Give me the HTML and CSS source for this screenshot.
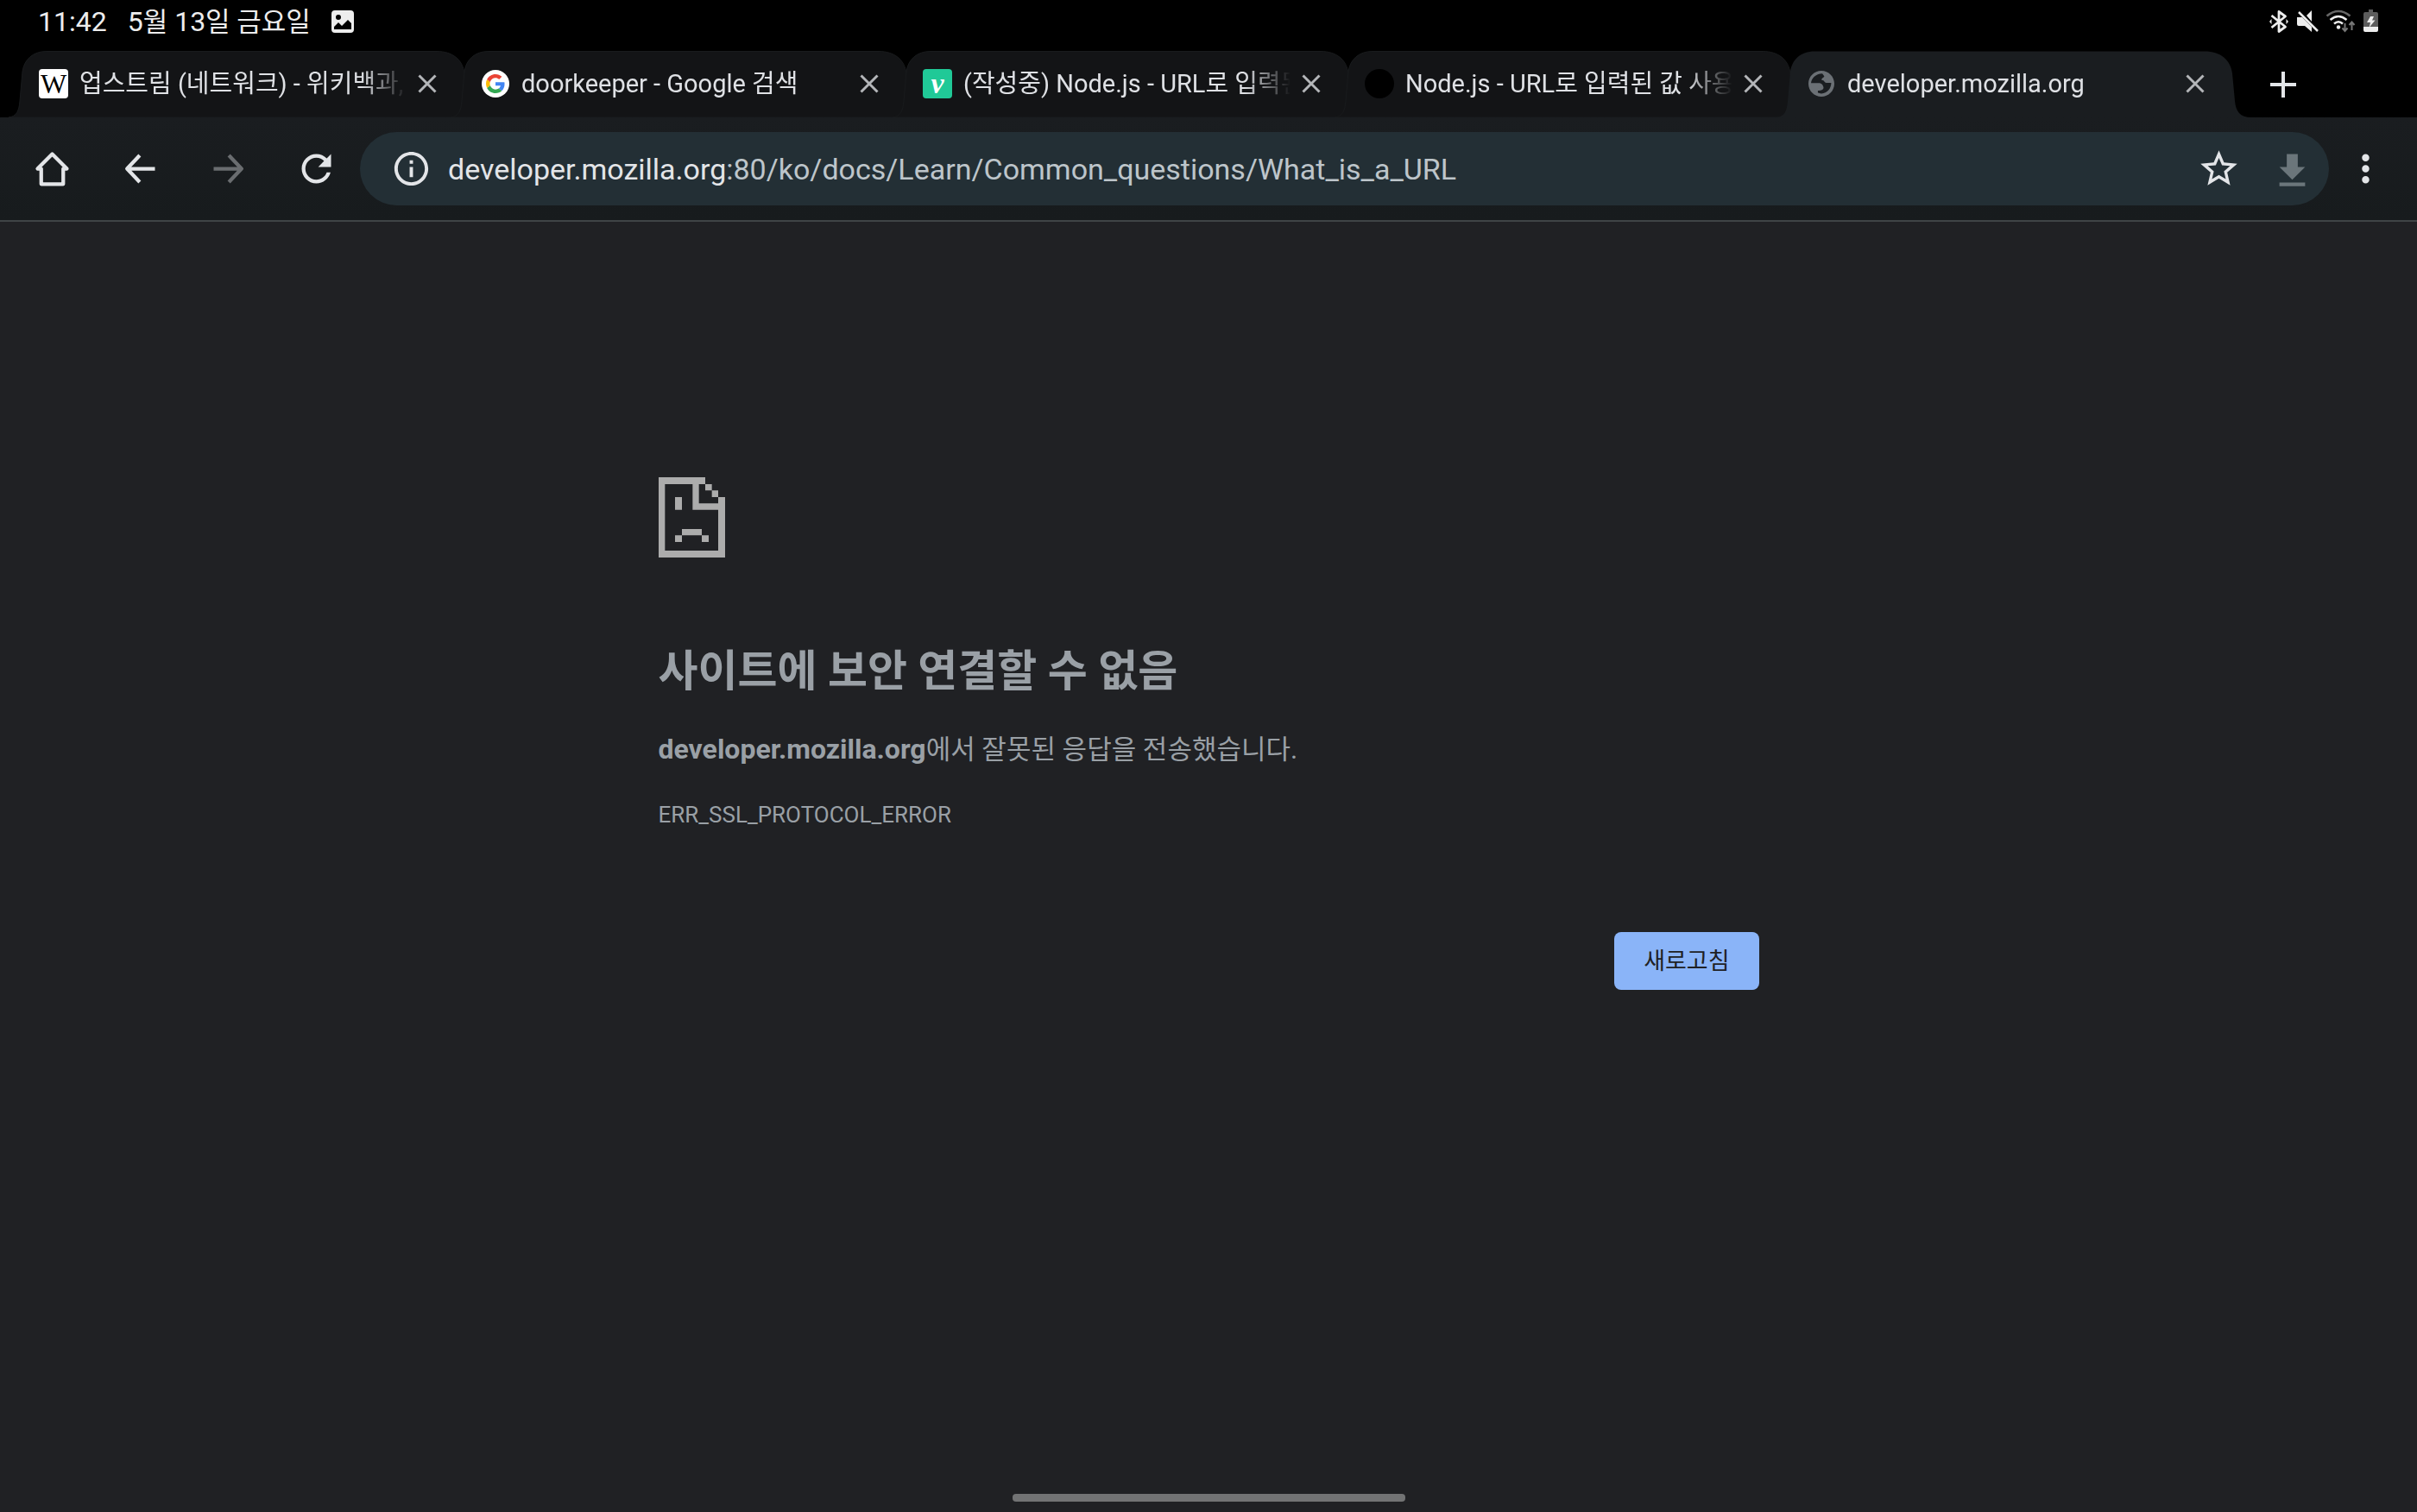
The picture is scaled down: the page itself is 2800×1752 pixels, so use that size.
FILE: index.html
```html
<!DOCTYPE html>
<html lang="ko">
<head>
<meta charset="UTF-8">
<meta name="viewport" content="width=device-width, initial-scale=1.0">
<title>developer.mozilla.org</title>
<link rel="stylesheet" href="styles.css">
</head>
<body>
<!-- 공용 아이콘 -->
<svg class="defs" aria-hidden="true">
    <symbol id="tab-shape" viewBox="0 0 550 77" preserveAspectRatio="none">
        <path d="M0 77C9 76 12 70 13 58L16 24C18 10 28 .5 44 .5H496C514 .5 526 10 528 26L531 58C532 70 537 77 550 77Z"/>
    </symbol>
    <symbol id="close" viewBox="0 0 24 24">
        <path d="M2.500 2.500L21.500 21.500M21.500 2.500L2.500 21.500" fill="none" stroke="currentColor" stroke-width="3"/>
    </symbol>
    <symbol id="globe" viewBox="0 0 24 24">
        <path d="M12 2C6.480 2 2 6.480 2 12s4.480 10 10 10 10-4.480 10-10S17.520 2 12 2zM4 11.500C4.300 8 7.500 4.400 12.700 4.200L14.200 6.200C14 7.500 12 7.500 12.200 9.200C14.500 9.300 14.300 11.300 15.800 11.300H19.600C19.600 15.500 16.500 19.400 12 19.600L9.300 19V17.300C12 17.300 14 16.500 13.600 14.600C13.200 13 12.200 11.500 10 11.500Z" fill-rule="evenodd" fill="currentColor"/>
    </symbol>
</svg>

<header class="status-bar">
    <span class="clock">11:42</span>
    <span class="date">5<span class="ko">월</span> 13<span class="ko">일 금요일</span></span>
    <svg class="status-icon" viewBox="0 0 26 26"><path fill="#ededed" fill-rule="evenodd" d="M4 0H22Q26 0 26 4V22Q26 26 22 26H4Q0 26 0 22V4Q0 0 4 0ZM8 5A3 3 0 1 0 8 11A3 3 0 1 0 8 5ZM3 22L3 19L8 14L12 18L19 11L23 15V22Z"/></svg>
    <div class="status-right">
        <svg width="24" height="28" viewBox="0 0 24 28"><path d="M3.500 7L19.500 20L12 25.500V2.500L19.500 8L3.500 21" fill="none" stroke="#ededed" stroke-width="2.800" stroke-linejoin="round"/><path d="M1 14L3.500 11V17ZM23 14L20.500 11V17Z" fill="#ededed"/></svg>
        <svg width="26" height="28" viewBox="0 0 26 28"><path d="M12 7L18 1V14ZM1 9H7L18 20V26L10 19H3Q1 19 1 17Z" fill="#ededed"/><path d="M3 3L25 25" stroke="#ededed" stroke-width="2.500"/></svg>
        <svg width="36" height="28" viewBox="0 0 36 28"><g fill="none" stroke="#ededed" stroke-width="2.600"><path d="M1.500 7.500Q15 -3.500 28.500 7.500" stroke="#666"/><path d="M5.500 12Q15 4 24.500 12"/><path d="M10 16.500Q15 12 20 16.500"/></g><circle cx="15" cy="20.500" r="2.200" fill="#ededed"/><path d="M22.500 16V24M19.500 21.500L22.500 25L25.500 21.500M30.500 24V15M27.500 18L30.500 14.500L33.500 18" fill="none" stroke="#777" stroke-width="2"/></svg>
        <svg width="18" height="28" viewBox="0 0 18 28"><path d="M6 0H11V3H15Q17 3 17 5V21H0V5Q0 3 2 3H6Z" fill="#5c5c5c"/><path d="M0 20H17V24Q17 26 15 26H2Q0 26 0 24Z" fill="#ededed"/><path d="M8 8H12L10 12.500H13.500L6.500 21L8 15H4Z" fill="#ededed"/></svg>
    </div>
</header>

<nav class="tabs" aria-label="탭">
    <div class="tab">
        <svg class="tab-bg"><use href="#tab-shape"/></svg>
        <span class="favicon wiki">W</span>
        <a href="#" class="tab-title">업스트림 (네트워크) - 위키백과,</a>
        <button class="tab-close" aria-label="닫기"><svg><use href="#close"/></svg></button>
    </div>
    <div class="tab">
        <svg class="tab-bg"><use href="#tab-shape"/></svg>
        <span class="favicon google"><svg viewBox="0 0 48 48"><path fill="#4285f4" d="M46.980 24.550c0-1.570-.15-3.090-.38-4.550H24v9.020h12.940c-.58 2.960-2.260 5.480-4.780 7.180l7.730 6c4.510-4.180 7.090-10.360 7.090-17.650z"/><path fill="#34a853" d="M24 48c6.480 0 11.930-2.130 15.890-5.810l-7.730-6c-2.150 1.450-4.920 2.300-8.160 2.300-6.260 0-11.570-4.220-13.470-9.910l-7.980 6.190C6.510 42.620 14.620 48 24 48z"/><path fill="#fbbc05" d="M10.530 28.590c-.48-1.450-.76-2.990-.76-4.590s.27-3.140.76-4.590l-7.980-6.190C.92 16.460 0 20.120 0 24c0 3.880.92 7.540 2.560 10.780l7.970-6.190z"/><path fill="#ea4335" d="M24 9.500c3.540 0 6.710 1.220 9.210 3.600l6.850-6.850C35.900 2.380 30.470 0 24 0 14.620 0 6.510 5.380 2.560 13.220l7.980 6.190C12.430 13.720 17.740 9.500 24 9.500z"/></svg></span>
        <a href="#" class="tab-title">doorkeeper - Google 검색</a>
        <button class="tab-close" aria-label="닫기"><svg><use href="#close"/></svg></button>
    </div>
    <div class="tab">
        <svg class="tab-bg"><use href="#tab-shape"/></svg>
        <span class="favicon velog">v</span>
        <a href="#" class="tab-title">(작성중) Node.js - URL로 입력된</a>
        <button class="tab-close" aria-label="닫기"><svg><use href="#close"/></svg></button>
    </div>
    <div class="tab">
        <svg class="tab-bg"><use href="#tab-shape"/></svg>
        <span class="favicon dark"></span>
        <a href="#" class="tab-title">Node.js - URL로 입력된 값 사용</a>
        <button class="tab-close" aria-label="닫기"><svg><use href="#close"/></svg></button>
    </div>
    <div class="tab active">
        <svg class="tab-bg"><use href="#tab-shape"/></svg>
        <span class="favicon globe"><svg><use href="#globe"/></svg></span>
        <a href="#" class="tab-title">developer.mozilla.org</a>
        <button class="tab-close" aria-label="닫기"><svg><use href="#close"/></svg></button>
    </div>
    <button class="new-tab" aria-label="새 탭"><svg viewBox="0 0 30 30"><path d="M15 0V30M0 15H30" stroke="currentColor" stroke-width="4"/></svg></button>
</nav>

<div class="toolbar">
    <button class="tool-btn" aria-label="홈"><svg viewBox="0 0 24 24"><path d="M4 12H6V20.400H18V12H20L12 4Z" fill="none" stroke="currentColor" stroke-width="2" stroke-linejoin="round"/></svg></button>
    <button class="tool-btn" aria-label="뒤로"><svg viewBox="0 0 24 24"><path d="M20 12H5.500M11.700 4.700L4.800 12L11.700 19.300" fill="none" stroke="currentColor" stroke-width="2" stroke-linejoin="round"/></svg></button>
    <button class="tool-btn" aria-label="앞으로" disabled><svg viewBox="0 0 24 24"><path d="M4 12H18.500M12.300 4.700L19.200 12L12.300 19.300" fill="none" stroke="currentColor" stroke-width="2" stroke-linejoin="round"/></svg></button>
    <button class="tool-btn" aria-label="새로고침"><svg viewBox="0 0 24 24"><path d="M17.650 6.350C16.200 4.900 14.210 4 12 4c-4.420 0-7.990 3.580-7.990 8s3.570 8 7.990 8c3.730 0 6.840-2.550 7.730-6h-2.080c-.82 2.330-3.040 4-5.650 4-3.310 0-6-2.690-6-6s2.690-6 6-6c1.660 0 3.140.69 4.220 1.780L13 11h7V4l-2.350 2.350z" fill="currentColor"/></svg></button>
    <div class="omnibox">
        <button class="info-btn" aria-label="사이트 정보"><svg viewBox="0 0 24 24"><path d="M11 7h2v2h-2zm0 4h2v6h-2zm1-9C6.480 2 2 6.480 2 12s4.480 10 10 10 10-4.480 10-10S17.520 2 12 2zm0 18c-4.410 0-8-3.590-8-8s3.590-8 8-8 8 3.590 8 8-3.590 8-8 8z" fill="currentColor"/></svg></button>
        <label class="host" for="url">developer.mozilla.org</label>
        <input id="url" class="url" type="text" value=":80/ko/docs/Learn/Common_questions/What_is_a_URL">
        <button class="omni-btn" aria-label="북마크"><svg viewBox="0 0 24 24"><path d="M22 9.240l-7.190-.62L12 2 9.190 8.630 2 9.240l5.460 4.730L5.820 21 12 17.270 18.180 21l-1.630-7.030L22 9.240zM12 15.400l-3.760 2.270 1-4.280-3.320-2.880 4.380-.38L12 6.100l1.710 4.040 4.380.38-3.320 2.880 1 4.280L12 15.400z" fill="currentColor"/></svg></button>
        <button class="omni-btn" aria-label="다운로드" disabled><svg viewBox="0 0 24 24"><path d="M9 4H15V11H19L12 18L5 11H9ZM5 19.500H19V21.500H5Z" fill="currentColor"/></svg></button>
    </div>
    <button class="menu-btn" aria-label="메뉴"><svg viewBox="0 0 24 24"><path d="M12 8c1.100 0 2-.9 2-2s-.9-2-2-2-2 .9-2 2 .9 2 2 2zm0 2c-1.100 0-2 .9-2 2s.9 2 2 2 2-.9 2-2-.9-2-2-2zm0 6c-1.100 0-2 .9-2 2s.9 2 2 2 2-.9 2-2-.9-2-2-2z" fill="currentColor"/></svg></button>
</div>

<main>
    <div class="error">
        <!-- 우는 얼굴 문서 아이콘 -->
        <svg class="error-icon" viewBox="0 0 231 279" fill="#acacac">
            <path d="M0 0H162V24H140V91H207V69H231V279H0ZM22 24V255H207V113H118V24Z" fill-rule="evenodd"/>
            <path d="M162 24H185V46H162ZM185 46H207V69H185ZM57 69H81V113H57ZM81 180H150V202H81ZM57 202H81V225H57ZM150 202H174V225H150Z"/>
        </svg>
        <h1>사이트에 보안 연결할 수 없음</h1>
        <p><strong>developer.mozilla.org</strong>에서 잘못된 응답을 전송했습니다.</p>
        <div class="error-code">ERR_SSL_PROTOCOL_ERROR</div>
        <div class="buttons">
            <button class="reload-btn" onclick="location.reload()">새로고침</button>
        </div>
    </div>
</main>

<div class="home-indicator"></div>
</body>
</html>
```
FILE: styles.css
```css
* {
    box-sizing: border-box;
}
body {
    margin: 0;
    min-height: 100vh;
    display: flex;
    flex-direction: column;
    background: #202124;
    color: #e3e5e8;
    font-family: Roboto, "Noto Sans CJK KR", sans-serif;
}
button {
    display: flex;
    align-items: center;
    justify-content: center;
    padding: 0;
    border: 0;
    background: none;
    color: inherit;
    font-family: inherit;
    cursor: pointer;
}
.defs {
    position: absolute;
    width: 0;
    height: 0;
}

/* 상태 표시줄 */
.status-bar {
    display: flex;
    align-items: center;
    height: 52px;
    padding: 0 44px 2px;
    background: #000;
    color: #ededed;
    font-size: 32px;
    line-height: 50px;
}
.date {
    margin-left: 24px;
}
.date .ko {
    font-size: 31px;
}
.status-icon {
    width: 26px;
    height: 26px;
    margin-left: 24px;
}
.status-right {
    display: flex;
    align-items: center;
    gap: 8px;
    margin-left: auto;
}

/* 탭 */
.tabs {
    display: flex;
    height: 84px;
    padding: 7px 10px 0;
    background: #000;
}
.tab {
    position: relative;
    display: flex;
    align-items: center;
    flex: 0 1 550px;
    min-width: 0;
    height: 77px;
    margin-right: -38px;
    padding: 0 51px 2px 35px;
}
.tab-bg {
    position: absolute;
    top: 0;
    left: 0;
    width: 100%;
    height: 100%;
    fill: #131416;
    stroke: #191b1d;
}
.tab.active .tab-bg {
    fill: #1a1d20;
    stroke: none;
}
.favicon {
    position: relative;
    display: flex;
    align-items: center;
    justify-content: center;
    flex: none;
    width: 34px;
    height: 34px;
    border-radius: 4px;
    line-height: 34px;
}
.wiki {
    background: #fff;
    color: #000;
    font-family: "Liberation Serif", serif;
    font-size: 32px;
}
.google {
    width: 32px;
    height: 32px;
    margin: 0 1px;
    border-radius: 50%;
    background: #fff;
}
.google svg {
    width: 22px;
    height: 22px;
}
.velog {
    background: #20c997;
    color: #fff;
    font-family: "Liberation Serif", serif;
    font-size: 34px;
    font-style: italic;
    font-weight: bold;
}
.dark {
    border-radius: 50%;
    background: #000;
}
.globe {
    color: #6b7075;
}
.globe svg {
    flex: none;
    width: 36px;
    height: 36px;
}
.tab-title {
    position: relative;
    flex: 1;
    min-width: 0;
    margin-left: 13px;
    overflow: hidden;
    white-space: nowrap;
    color: #dfe1e5;
    font-size: 29px;
    line-height: 44px;
    text-decoration: none;
    -webkit-mask-image: linear-gradient(to right, #000 86%, transparent);
    mask-image: linear-gradient(to right, #000 86%, transparent);
}
.tab-close {
    position: relative;
    width: 28px;
    height: 44px;
    margin-left: 10px;
    color: #b4b6b9;
}
.tab-close svg {
    width: 24px;
    height: 24px;
}
.new-tab {
    width: 102px;
    height: 77px;
    margin-left: 24px;
}
.new-tab svg {
    width: 30px;
    height: 30px;
}

/* 주소창 */
.toolbar {
    display: flex;
    align-items: center;
    height: 121px;
    padding: 0 18px 0 9px;
    background: linear-gradient(#1a1d20, #171b1d);
    border-bottom: 2px solid #3f4446;
}
.toolbar svg {
    width: 51px;
    height: 51px;
}
.tool-btn {
    width: 102px;
    height: 102px;
}
.tool-btn:disabled {
    color: #6a6d70;
}
.omnibox {
    display: flex;
    align-items: center;
    flex: 1;
    min-width: 0;
    height: 85px;
    padding-left: 34px;
    border-radius: 43px;
    background: #232f35;
    font-size: 34px;
}
.toolbar .info-btn svg {
    width: 47px;
    height: 47px;
}
.info-btn {
    width: 51px;
    height: 85px;
    margin-right: 17px;
}
.host {
    line-height: 48px;
}
.url {
    flex: 1;
    min-width: 0;
    height: 48px;
    padding: 0;
    border: 0;
    outline: 0;
    background: none;
    color: #bdc5ca;
    font: inherit;
}
.omni-btn {
    width: 85px;
    height: 85px;
}
.omni-btn:disabled {
    color: #6b767b;
}
.menu-btn {
    width: 84px;
    height: 102px;
}

/* 오류 페이지 */
main {
    flex: 1;
    color: #9aa0a6;
}
.error {
    max-width: 1275px;
    margin: 0 auto;
    padding-top: 296px;
}
.error-icon {
    display: block;
    width: 77px;
    height: 93px;
}
h1 {
    margin: 94px 0 28px;
    font-size: 50px;
    font-weight: 600;
    line-height: 76px;
}
p {
    margin: 0 0 34px;
    font-size: 31px;
    line-height: 48px;
}
p strong {
    font-size: 32px;
}
.error-code {
    font-size: 26px;
    line-height: 34px;
}
.buttons {
    display: flex;
    justify-content: flex-end;
    margin-top: 119px;
}
.reload-btn {
    height: 67px;
    padding: 0 34px;
    border-radius: 8px;
    background: #8ab4f8;
    color: #202124;
    font-size: 27px;
    line-height: 40px;
}

/* 하단 제스처 바 */
.home-indicator {
    width: 455px;
    height: 9px;
    margin: 0 auto 12px;
    border-radius: 4px;
    background: #727374;
}
```
